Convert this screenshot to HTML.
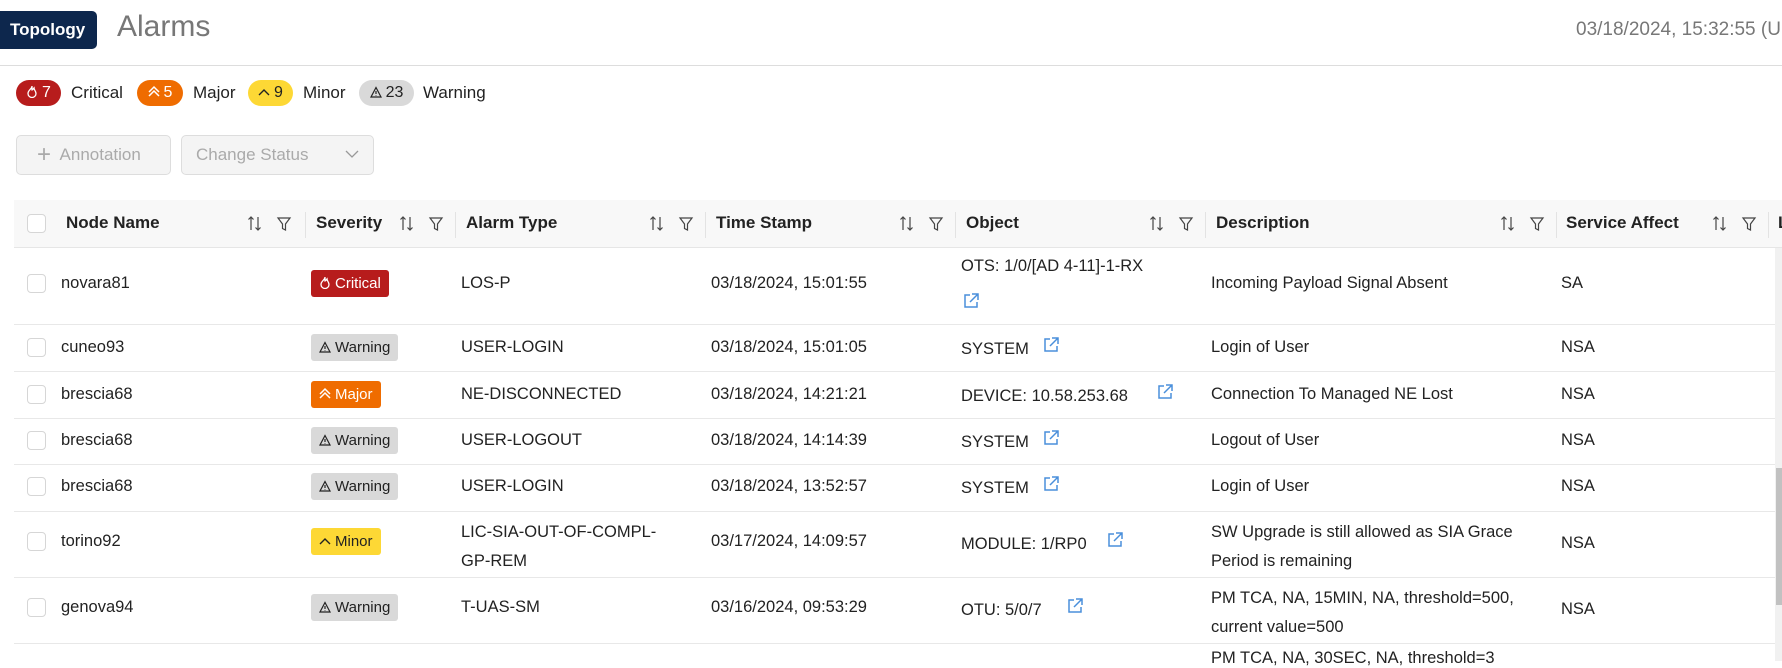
<!DOCTYPE html>
<html><head><meta charset="utf-8"><style>
*{box-sizing:border-box;margin:0;padding:0}
body{width:1782px;height:661px;overflow:hidden;background:#fff;font-family:"Liberation Sans",sans-serif;color:#222;position:relative;font-size:16.5px}
.a{position:absolute;white-space:nowrap}
.topo{left:0;top:11px;width:97px;height:38px;background:#0d274d;color:#fff;border-radius:0 5px 5px 0;font-size:17px;font-weight:bold;line-height:38px;padding-left:10px}
.title{left:117px;top:10px;font-size:30px;color:#777;font-weight:300}
.date{left:1576px;top:19px;font-size:19px;color:#777}
.hl{left:0;top:65px;width:1782px;height:1px;background:#ddd}
.pill{height:26px;top:80px;border-radius:13px;font-size:16px;line-height:26px;text-align:center}
.pill svg,.bd svg{vertical-align:-1px;margin-right:4px}
.pl{top:80px;line-height:26px;font-size:17px}
.btn{top:135px;height:40px;border:1px solid #ddd;border-radius:5px;background:#f4f4f4;color:#aaa;font-size:17px;line-height:38px}
.th{left:14px;top:200px;width:1768px;height:48px;background:#f8f8f8;border-bottom:1px solid #e6e6e6}
.hd{top:213px;font-weight:bold;font-size:17px;color:#222}
.sep{top:212px;width:1px;height:26px;background:#e3e3e3}
.cb{width:19px;height:19px;border:1px solid #d6d6d6;border-radius:4px;background:#fff}
.rl{left:14px;width:1761px;height:1px;background:#e8e8e8}
.bd{position:absolute;height:27px;border-radius:3px;font-size:15px;line-height:27px;padding:0 8px 0 8px}
.crit{background:#b71c1c;color:#fff}
.warn{background:#d9d9d9;color:#222}
.maj{background:#ef6c00;color:#fff}
.min{background:#fdd835;color:#222}
.ic{position:absolute}
</style></head><body>
<svg width="0" height="0" style="position:absolute">
<defs>
<g id="s" fill="none" stroke="#444" stroke-width="1.2"><path d="M3 4v13M0.5 6.5L3 4l2.5 2.5M10 4v13M7.5 14.5L10 17l2.5-2.5"/><path d="M30 5h12l-4.5 6v6l-3-1.5v-4.5z"/></g>
<g id="fl"><path d="M6 1C6 4 2 5 2 8.5a4 4 0 0 0 8 0C10 6 8 5 8 3 7 4 7 5 6 5 6 3 6 2 6 1z" fill="none" stroke="currentColor" stroke-width="1.3"/></g>
<g id="dc"><path d="M1 7l5-5 5 5M1 11l5-5 5 5" fill="none" stroke="currentColor" stroke-width="1.5"/></g>
<g id="ch"><path d="M1 8l5-5 5 5" fill="none" stroke="currentColor" stroke-width="1.4"/></g>
<g id="tr"><path d="M6 1.5L11 11H1z M6 5v3M6 9.2v.6" fill="none" stroke="currentColor" stroke-width="1.2"/></g>
<g id="ln"><path d="M7 3H2v12h12v-5M9 2h6v6M15 2L7 10" fill="none" stroke="#4a8fdb" stroke-width="1.5"/></g>
</defs></svg>

<div class="a topo">Topology</div>
<div class="a title">Alarms</div>
<div class="a date">03/18/2024, 15:32:55 (U</div>
<div class="a hl"></div>

<div class="a pill" style="left:16px;width:45px;background:#b71c1c;color:#fff"><svg width="12" height="13"><use href="#fl"/></svg>7</div>
<div class="a pl" style="left:71px">Critical</div>
<div class="a pill" style="left:137px;width:46px;background:#ef6c00;color:#fff"><svg width="12" height="13"><use href="#dc"/></svg>5</div>
<div class="a pl" style="left:193px">Major</div>
<div class="a pill" style="left:248px;width:45px;background:#fdd835;color:#222"><svg width="12" height="11"><use href="#ch"/></svg>9</div>
<div class="a pl" style="left:303px">Minor</div>
<div class="a pill" style="left:359px;width:55px;background:#d9d9d9;color:#222"><svg width="12" height="12"><use href="#tr"/></svg>23</div>
<div class="a pl" style="left:423px">Warning</div>

<div class="a btn" style="left:16px;width:155px;padding-left:20px"><span style="font-size:24px;vertical-align:-2px">+</span>&nbsp; Annotation</div>
<div class="a btn" style="left:181px;width:193px;padding-left:14px">Change Status<svg style="position:absolute;right:14px;top:14px" width="14" height="9"><path d="M1 1l6 6 6-6" fill="none" stroke="#999" stroke-width="1.3"/></svg></div>

<div class="a th"></div>
<div class="a cb" style="left:27px;top:214px"></div>

<div class="a hd" style="left:66px">Node Name</div>
<div class="a hd" style="left:316px">Severity</div>
<div class="a hd" style="left:466px">Alarm Type</div>
<div class="a hd" style="left:716px">Time Stamp</div>
<div class="a hd" style="left:966px">Object</div>
<div class="a hd" style="left:1216px">Description</div>
<div class="a hd" style="left:1566px">Service Affect</div>
<div class="a hd" style="left:1778px">L</div>
<div class="a sep" style="left:305px"></div>
<div class="a sep" style="left:455px"></div>
<div class="a sep" style="left:705px"></div>
<div class="a sep" style="left:955px"></div>
<div class="a sep" style="left:1205px"></div>
<div class="a sep" style="left:1556px"></div>
<div class="a sep" style="left:1768px"></div>

<svg class="ic" style="left:0;top:213px" width="1782" height="22">
<use href="#s" x="248"/><use href="#s" x="400"/><use href="#s" x="650"/><use href="#s" x="900"/><use href="#s" x="1150"/><use href="#s" x="1501"/><use href="#s" x="1713"/>
</svg>

<div class="a rl" style="top:324px"></div>
<div class="a rl" style="top:371px"></div>
<div class="a rl" style="top:418px"></div>
<div class="a rl" style="top:464px"></div>
<div class="a rl" style="top:511px"></div>
<div class="a rl" style="top:577px"></div>
<div class="a rl" style="top:643px"></div>

<div class="a" style="left:1775px;top:248px;width:7px;height:413px;background:#f1f1f1"></div>
<div class="a" style="left:1776px;top:468px;width:6px;height:137px;background:#c1c1c1"></div>

<!-- r1 -->
<div class="a cb" style="left:27px;top:274px"></div>
<div class="a" style="left:61px;top:274px">novara81</div>
<div class="bd crit" style="left:311px;top:270px"><svg width="12" height="13"><use href="#fl"/></svg>Critical</div>
<div class="a" style="left:461px;top:274px">LOS-P</div>
<div class="a" style="left:711px;top:274px">03/18/2024, 15:01:55</div>
<div class="a" style="left:961px;top:257px">OTS: 1/0/[AD 4-11]-1-RX</div>
<svg class="ic" style="left:963px;top:292px" width="17" height="17"><use href="#ln"/></svg>
<div class="a" style="left:1211px;top:274px">Incoming Payload Signal Absent</div>
<div class="a" style="left:1561px;top:274px">SA</div>

<!-- r2 -->
<div class="a cb" style="left:27px;top:338px"></div>
<div class="a" style="left:61px;top:338px">cuneo93</div>
<div class="bd warn" style="left:311px;top:334px"><svg width="12" height="12"><use href="#tr"/></svg>Warning</div>
<div class="a" style="left:461px;top:338px">USER-LOGIN</div>
<div class="a" style="left:711px;top:338px">03/18/2024, 15:01:05</div>
<div class="a" style="left:961px;top:340px">SYSTEM</div>
<svg class="ic" style="left:1043px;top:336px" width="17" height="17"><use href="#ln"/></svg>
<div class="a" style="left:1211px;top:338px">Login of User</div>
<div class="a" style="left:1561px;top:338px">NSA</div>

<!-- r3 -->
<div class="a cb" style="left:27px;top:385px"></div>
<div class="a" style="left:61px;top:385px">brescia68</div>
<div class="bd maj" style="left:311px;top:381px"><svg width="12" height="13"><use href="#dc"/></svg>Major</div>
<div class="a" style="left:461px;top:385px">NE-DISCONNECTED</div>
<div class="a" style="left:711px;top:385px">03/18/2024, 14:21:21</div>
<div class="a" style="left:961px;top:387px">DEVICE: 10.58.253.68</div>
<svg class="ic" style="left:1157px;top:383px" width="17" height="17"><use href="#ln"/></svg>
<div class="a" style="left:1211px;top:385px">Connection To Managed NE Lost</div>
<div class="a" style="left:1561px;top:385px">NSA</div>

<!-- r4 -->
<div class="a cb" style="left:27px;top:431px"></div>
<div class="a" style="left:61px;top:431px">brescia68</div>
<div class="bd warn" style="left:311px;top:427px"><svg width="12" height="12"><use href="#tr"/></svg>Warning</div>
<div class="a" style="left:461px;top:431px">USER-LOGOUT</div>
<div class="a" style="left:711px;top:431px">03/18/2024, 14:14:39</div>
<div class="a" style="left:961px;top:433px">SYSTEM</div>
<svg class="ic" style="left:1043px;top:429px" width="17" height="17"><use href="#ln"/></svg>
<div class="a" style="left:1211px;top:431px">Logout of User</div>
<div class="a" style="left:1561px;top:431px">NSA</div>

<!-- r5 -->
<div class="a cb" style="left:27px;top:477px"></div>
<div class="a" style="left:61px;top:477px">brescia68</div>
<div class="bd warn" style="left:311px;top:473px"><svg width="12" height="12"><use href="#tr"/></svg>Warning</div>
<div class="a" style="left:461px;top:477px">USER-LOGIN</div>
<div class="a" style="left:711px;top:477px">03/18/2024, 13:52:57</div>
<div class="a" style="left:961px;top:479px">SYSTEM</div>
<svg class="ic" style="left:1043px;top:475px" width="17" height="17"><use href="#ln"/></svg>
<div class="a" style="left:1211px;top:477px">Login of User</div>
<div class="a" style="left:1561px;top:477px">NSA</div>

<!-- r6 -->
<div class="a cb" style="left:27px;top:532px"></div>
<div class="a" style="left:61px;top:532px">torino92</div>
<div class="bd min" style="left:311px;top:528px"><svg width="12" height="11"><use href="#ch"/></svg>Minor</div>
<div class="a" style="left:461px;top:518px;line-height:29px">LIC-SIA-OUT-OF-COMPL-<br>GP-REM</div>
<div class="a" style="left:711px;top:532px">03/17/2024, 14:09:57</div>
<div class="a" style="left:961px;top:535px">MODULE: 1/RP0</div>
<svg class="ic" style="left:1107px;top:531px" width="17" height="17"><use href="#ln"/></svg>
<div class="a" style="left:1211px;top:518px;line-height:29px">SW Upgrade is still allowed as SIA Grace<br>Period is remaining</div>
<div class="a" style="left:1561px;top:534px">NSA</div>

<!-- r7 -->
<div class="a cb" style="left:27px;top:598px"></div>
<div class="a" style="left:61px;top:598px">genova94</div>
<div class="bd warn" style="left:311px;top:594px"><svg width="12" height="12"><use href="#tr"/></svg>Warning</div>
<div class="a" style="left:461px;top:598px">T-UAS-SM</div>
<div class="a" style="left:711px;top:598px">03/16/2024, 09:53:29</div>
<div class="a" style="left:961px;top:601px">OTU: 5/0/7</div>
<svg class="ic" style="left:1067px;top:597px" width="17" height="17"><use href="#ln"/></svg>
<div class="a" style="left:1211px;top:584px;line-height:29px">PM TCA, NA, 15MIN, NA, threshold=500,<br>current value=500</div>
<div class="a" style="left:1561px;top:600px">NSA</div>

<div class="a" style="left:1211px;top:649px">PM TCA, NA, 30SEC, NA, threshold=3</div>
</body></html>
